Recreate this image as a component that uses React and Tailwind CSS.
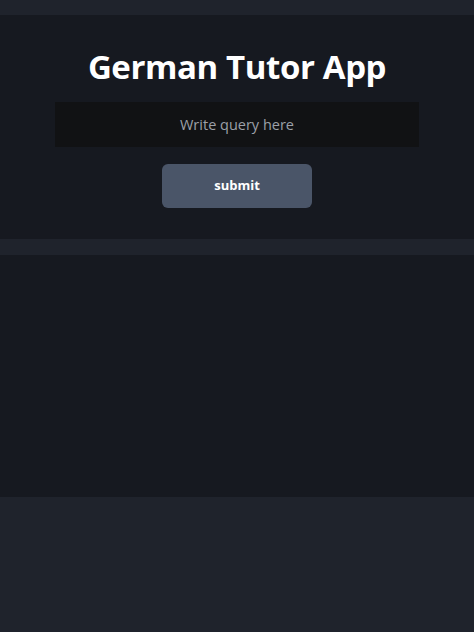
import React, { useState } from "react";

const App = () => {
  const [query, setQuery] = useState("");

  return (
    <div
      className="min-h-[632px] w-full bg-[#1f232c] pt-[15px] flex flex-col gap-4"
      style={{ fontFamily: '"Open Sans", "Noto Sans", sans-serif' }}
    >
      <div className="h-[224px] bg-[#161920] flex flex-col items-center pt-[29px]">
        <h1 className="text-[33px] leading-[46px] font-bold text-white tracking-[-0.4px]">
          German Tutor App
        </h1>
        <input
          value={query}
          onChange={(e) => setQuery(e.target.value)}
          placeholder="Write query here"
          className="mt-[12px] w-[364px] h-[45px] bg-[#111214] text-center text-white text-[14.5px] placeholder:text-[#9ca0a8] outline-none"
        />
        <button className="mt-[17px] w-[150px] h-[44px] rounded-md bg-[#4a5568] text-white text-[13px] font-bold">
          submit
        </button>
      </div>
      <div className="h-[242px] bg-[#161920]"></div>
    </div>
  );
};

export default App;
